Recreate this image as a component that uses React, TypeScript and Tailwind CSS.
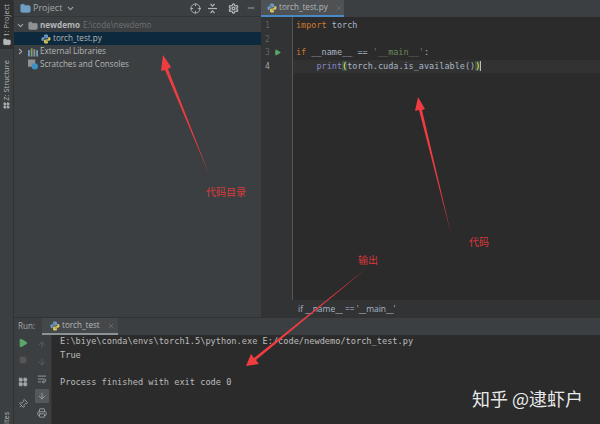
import { ArrowDown, ArrowUp, ChevronDown, ChevronRight, Crosshair, Folder, LayoutGrid, Minus, Pin, Play, Printer, Settings, Square, WrapText, X } from 'lucide-react';

const mono = "font-['DejaVu_Sans_Mono',monospace]";
const sans = "font-['Open_Sans','Noto_Sans',sans-serif]";
const cjk = "font-['Noto_Sans_CJK_SC',sans-serif]";

function PyIcon({ size = 10 }: { size?: number }) {
  return (
    <svg width={size} height={size} viewBox="0 0 12 12" className="shrink-0">
      <path d="M6 0.5C3.8 0.5 3.5 1.3 3.5 2.2V3.4H6.2V4H2.2C1 4 0.5 5 0.5 6.2S1.1 8.5 2.2 8.5H3.2V7.1C3.2 6 4 5.4 5 5.4H7C7.8 5.4 8.4 4.8 8.4 4V2.2C8.4 1.1 7.6 0.5 6 0.5Z" fill="#6b9cc4" />
      <path d="M6 11.5C8.2 11.5 8.5 10.7 8.5 9.8V8.6H5.8V8H9.8C11 8 11.5 7 11.5 5.8S10.9 3.5 9.8 3.5H8.8V4.9C8.8 6 8 6.6 7 6.6H5C4.2 6.6 3.6 7.2 3.6 8V9.8C3.6 10.9 4.4 11.5 6 11.5Z" fill="#d9c35c" />
    </svg>
  );
}

// collapse-all glyph from the project toolbar
function CollapseIcon() {
  return (
    <svg width="11" height="11" viewBox="0 0 11 11" className="shrink-0" fill="none" stroke="currentColor" strokeWidth="1.2">
      <path d="M1 5.5H10" />
      <path d="M3.5 1L5.5 3.2L7.5 1" />
      <path d="M3.5 10L5.5 7.8L7.5 10" />
    </svg>
  );
}

function ProjectPanel() {
  return (
    <div className={`w-[247px] shrink-0 flex flex-col bg-[#3c3f41] text-[8.1px] text-[#b4b7b9] ${sans}`}>
      <div className="h-[17px] flex items-center pl-[6px] pr-[5px] bg-[#3c3f41] border-b border-[#333536]">
        <Folder size={11} className="text-[#6f9fc4] fill-[#6f9fc4]" />
        <span className="ml-[2px] text-[9px] text-[#a4a7a9]">Project</span>
        <ChevronDown size={9} className="ml-[4px] text-[#a4a7a9]" strokeWidth={3} />
        <div className="flex-1" />
        <div className="flex items-center text-[#b0b3b5]">
          <Crosshair size={11} />
          <div className="ml-[6px]"><CollapseIcon /></div>
          <Settings size={11} strokeWidth={3} className="ml-[10px]" />
          <Minus size={10} className="ml-[7px]" />
        </div>
      </div>
      <div className="pt-[2px]">
        <div className="h-[13px] flex items-center pl-[2px]">
          <ChevronDown size={9} strokeWidth={3} className="mr-[3px] text-[#a4a7a9]" />
          <Folder size={10} className="text-[#8d9295] fill-[#8d9295]" />
          <span className="ml-[2px] font-bold text-[#b4b7b9]">newdemo</span>
          <span className="ml-[3px] text-[#6f7173]">E:\code\newdemo</span>
        </div>
        <div className="h-[13px] flex items-center pl-[27px] gap-[2px] bg-[#0d293e]">
          <PyIcon />
          <span className="text-[#b4b7b9]">torch_test.py</span>
        </div>
        <div className="h-[13px] flex items-center pl-[2px]">
          <ChevronRight size={9} strokeWidth={3} className="mr-[3px] text-[#a4a7a9]" />
          <svg width="10" height="10" viewBox="0 0 11 10" className="shrink-0">
            <rect x="0" y="3" width="2" height="7" fill="#6f9fc4" />
            <rect x="3" y="1" width="2" height="9" fill="#7fa06c" />
            <rect x="6" y="2" width="2" height="8" fill="#8d9295" />
            <rect x="9" y="3" width="2" height="7" fill="#6f9fc4" />
          </svg>
          <span className="ml-[2px]">External Libraries</span>
        </div>
        <div className="h-[13px] flex items-center pl-[14px]">
          <svg width="10" height="11" viewBox="0 0 11 11" className="shrink-0">
            <rect x="0" y="0" width="8" height="8" fill="#8d9295" />
            <circle cx="7.5" cy="7.5" r="3.5" fill="#3d8fc4" />
          </svg>
          <span className="ml-[2px]">Scratches and Consoles</span>
        </div>
      </div>
    </div>
  );
}

function Editor() {
  return (
    <div className="flex-1 flex flex-col min-w-0 bg-[#2b2b2b]">
      <div className={`h-[17px] flex bg-[#3c3f41] text-[8.1px] text-[#b4b7b9] ${sans}`}>
        <div className="w-[83px] flex items-center pl-[6px] gap-[2px] bg-[#4e5254] border-b-2 border-[#4a88c7]">
          <PyIcon />
          <span>torch_test.py</span>
          <X size={8} className="ml-[5px] text-[#6f7173]" />
        </div>
      </div>
      <div className="flex-1 flex min-h-0">
        <div className={`w-[32px] shrink-0 bg-[#313335] border-r border-[#555] text-[8px] text-[#606366] pl-[4px] pt-[2px] ${mono}`}>
          <div className="h-[13.5px] leading-[13.5px]">1</div>
          <div className="h-[13.5px] leading-[13.5px]">2</div>
          <div className="h-[13.5px] leading-[13.5px] flex items-center gap-[4px]">3<Play size={7} className="text-[#59a869] fill-[#59a869]" /></div>
          <div className="h-[13.5px] leading-[13.5px] text-[#a4a3a3]">4</div>
        </div>
        <div className={`flex-1 pt-[2px] text-[8.5px] text-[#a9b7c6] whitespace-pre ${mono}`}>
          <div className="h-[13.5px] leading-[13.5px] pl-[3px]"><span className="text-[#cc7832]">import</span> torch</div>
          <div className="h-[13.5px]" />
          <div className="h-[13.5px] leading-[13.5px] pl-[3px]"><span className="text-[#cc7832]">if</span> __name__ == <span className="text-[#6a8759]">'__main__'</span>:</div>
          <div className="h-[13.5px] leading-[13.5px] pl-[3px] bg-[#323232]">    <span className="text-[#8888c6]">print</span><span className="bg-[#3b514d] text-[#ffef28]">(</span>torch.cuda.is_available()<span className="bg-[#3b514d] text-[#ffef28]">)</span><span className="border-l border-[#bbb]" /></div>
        </div>
      </div>
      <div className="h-[17px] flex">
        <div className="w-[32px] bg-[#313335] shrink-0" />
        <div className={`flex-1 bg-[#313335] pl-[5px] text-[8.5px] leading-[17px] text-[#a9b7c6] ${sans}`}>if __name__ == '__main__'</div>
      </div>
    </div>
  );
}

function RunPanel() {
  return (
    <div className="h-[107px] shrink-0 flex flex-col bg-[#2b2b2b]">
      <div className={`h-[18px] shrink-0 border-t border-[#323232] bg-[#3c3f41] flex items-stretch text-[8.1px] text-[#a4a7a9] ${sans}`}>
        <span className="ml-[4px] self-center">Run:</span>
        <div className="ml-[7px] w-[76px] pl-[8px] gap-[2px] flex items-center border-b-2 border-[#8d9295] bg-[#45484a]">
          <PyIcon />
          <span className="text-[#b4b7b9]">torch_test</span>
          <X size={8} className="ml-[5px] text-[#6f7173]" />
        </div>
      </div>
      <div className="flex-1 flex min-h-0">
        <div className="w-[18px] shrink-0 bg-[#3c3f41] flex flex-col items-center pt-[3px] text-[#a4a7a9]">
          <Play size={10} className="text-[#59a869] fill-[#59a869]" />
          <Square size={8} className="mt-[8px] text-[#555] fill-[#555]" />
          <LayoutGrid size={10} className="mt-[13px] fill-[#a4a7a9]" />
          <Pin size={10} className="mt-[12px] rotate-45" />
        </div>
        <div className="w-[20px] shrink-0 bg-[#3c3f41] flex flex-col items-center pt-[5px] gap-[7px] border-r border-[#323232] text-[#a4a7a9]">
          <ArrowUp size={10} className="text-[#5f6264]" />
          <ArrowDown size={10} className="text-[#5f6264]" />
          <WrapText size={10} />
          <div className="bg-[#55585a] w-[14px] h-[14px] -my-[2px] flex items-center justify-center rounded-[1px]"><ArrowDown size={10} /></div>
          <Printer size={10} />
        </div>
        <div className={`flex-1 pl-[8px] text-[8.65px] text-[#bbbbbb] whitespace-pre ${mono}`}>
          <div className="h-[13.5px] leading-[13.5px]">E:\biye\conda\envs\torch1.5\python.exe E:/code/newdemo/torch_test.py</div>
          <div className="h-[13.5px] leading-[13.5px]">True</div>
          <div className="h-[13.5px]" />
          <div className="h-[13.5px] leading-[13.5px]">Process finished with exit code 0</div>
        </div>
      </div>
    </div>
  );
}

function Rail() {
  return (
    <div className={`w-[14px] shrink-0 bg-[#3c3f41] border-r border-[#323232] flex flex-col items-center text-[7.5px] text-[#b4b7b9] overflow-hidden ${sans}`}>
      <div className="w-full bg-[#2d2f30] h-[49px] flex flex-col items-center pt-[4px]">
        <span className="[writing-mode:vertical-rl] rotate-180">1: Project</span>
        <Folder size={8} className="mt-[1px] fill-[#b4b7b9]" />
      </div>
      <span className="mt-[11px] [writing-mode:vertical-rl] rotate-180">Z: Structure</span>
      <LayoutGrid size={7} className="mt-[1px] fill-[#a4a7a9]" />
      <div className="flex-1" />
      <span className="[writing-mode:vertical-rl] rotate-180 h-[12px] overflow-hidden">ites</span>
    </div>
  );
}

export default function App() {
  return (
    <div className="relative w-[600px] h-[424px] overflow-hidden flex bg-[#3c3f41]">
      <Rail />
      <div className="flex-1 flex flex-col min-w-0">
        <div className="flex-1 flex min-h-0">
          <ProjectPanel />
          <Editor />
        </div>
        <RunPanel />
      </div>
      {/* annotations drawn over the screenshot */}
      <svg width="600" height="424" viewBox="0 0 600 424" className="absolute inset-0 pointer-events-none">
        <polygon points="209,174 168,69 171,67 163,55 161,71 165,70" fill="#ef3c40" />
        <polygon points="451,234 422,110 425,109 418,97 415,111 419,110" fill="#ef3c40" />
        <polygon points="367,268 254,358 251,354 246,366 259,364 256,360" fill="#ef3c40" />
      </svg>
      <span className={`absolute left-[206px] top-[185px] text-[10px] leading-[14px] text-[#d8393c] ${cjk}`}>代码目录</span>
      <span className={`absolute left-[469px] top-[235px] text-[10px] leading-[14px] text-[#d8393c] ${cjk}`}>代码</span>
      <span className={`absolute left-[358px] top-[253px] text-[10px] leading-[14px] text-[#d8393c] ${cjk}`}>输出</span>
      <span className={`absolute left-[472px] top-[387px] text-[18px] leading-[22px] text-[#e8e8e8] ${cjk}`}>知乎 @逮虾户</span>
    </div>
  );
}
